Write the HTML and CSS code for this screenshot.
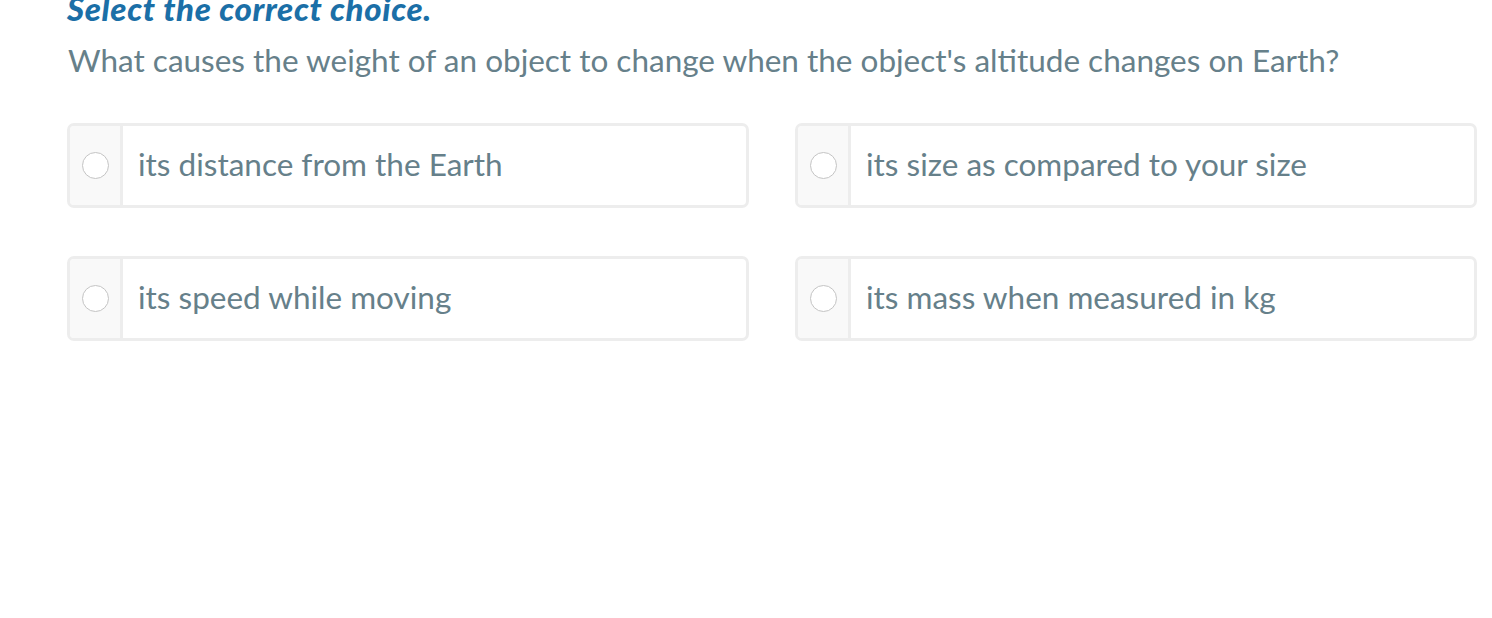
FILE: index.html
```html
<!DOCTYPE html>
<html>
<head>
<meta charset="utf-8">
<link rel="stylesheet" href="styles.css">
</head>
<body>
<div class="page">
  <h1 class="title">Select the correct choice.</h1>
  <p class="question">What causes the weight of an object to change when the object's altitude changes on Earth?</p>
  <div class="choices">
    <div class="choice"><div class="radio-cell"><span class="radio"></span></div><div class="label">its distance from the Earth</div></div>
    <div class="choice"><div class="radio-cell"><span class="radio"></span></div><div class="label">its size as compared to your size</div></div>
    <div class="choice"><div class="radio-cell"><span class="radio"></span></div><div class="label">its speed while moving</div></div>
    <div class="choice"><div class="radio-cell"><span class="radio"></span></div><div class="label">its mass when measured in kg</div></div>
  </div>
</div>
</body>
</html>
```
FILE: styles.css
```css
html, body { margin: 0; padding: 0; background: #fff; }
body { font-family: "Lato", "Open Sans", sans-serif; }
.page { padding: 0 16px 0 67px; margin-top: -11px; }
.title {
  margin: 0;
  font-size: 33px;
  line-height: 38px;
  font-weight: 900;
  font-style: italic;
  color: #1b6fa7;
  letter-spacing: 0.65px;
}
.question {
  margin: 11px 0 0 1px;
  font-size: 31.5px;
  line-height: 44px;
  color: #66808a;
}
.choices {
  display: grid;
  grid-template-columns: 682px 682px;
  column-gap: 46px;
  row-gap: 48px;
  margin-top: 41px;
}
.choice {
  display: flex;
  height: 85px;
  box-sizing: border-box;
  border: 3px solid #ededed;
  border-radius: 7px;
  overflow: hidden;
  background: #fff;
}
.radio-cell {
  width: 50px;
  flex: none;
  background: #f9f9f9;
  border-right: 3px solid #ededed;
  display: flex;
  align-items: center;
  justify-content: center;
}
.radio {
  width: 27px;
  height: 27px;
  box-sizing: border-box;
  border: 1px solid #c4c4c4;
  border-radius: 50%;
  background: #fff;
}
.label {
  display: flex;
  align-items: center;
  padding: 0 0 3px 15px;
  font-size: 31.5px;
  color: #66808a;
}
```
